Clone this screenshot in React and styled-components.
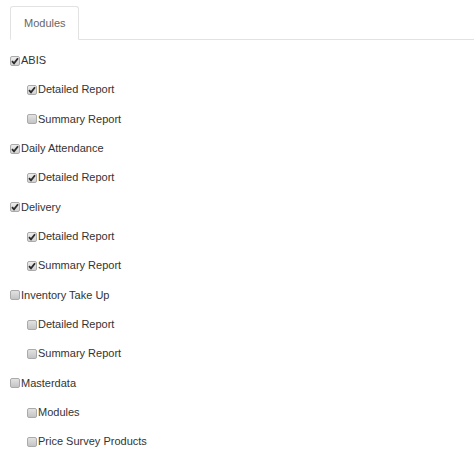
import React, { useState } from "react"
import styled, { createGlobalStyle } from "styled-components"

const modules = [
    { name: "ABIS", checked: true, reports: [["Detailed Report", true], ["Summary Report", false]] },
    { name: "Daily Attendance", checked: true, reports: [["Detailed Report", true]] },
    { name: "Delivery", checked: true, reports: [["Detailed Report", true], ["Summary Report", true]] },
    { name: "Inventory Take Up", checked: false, reports: [["Detailed Report", false], ["Summary Report", false]] },
    { name: "Masterdata", checked: false, reports: [["Modules", false], ["Price Survey Products", false]] },
]

const CheckBox = ({ checked, onClick }) => (
    <Box checked={checked} onClick={onClick}>
        {checked && (
            <svg width="8" height="8" viewBox="0 0 8 8">
                <path d="M1 4.2 L3 6.4 L7 1.2" fill="none" stroke="#2b2b2b" strokeWidth="1.8" />
            </svg>
        )}
    </Box>
)

const App = () => {
    const [state, setState] = useState(modules)

    const toggle = (i, j) => {
        setState(prev =>
            prev.map((m, mi) => {
                if (mi !== i) return m
                if (j === undefined) return { ...m, checked: !m.checked }
                return {
                    ...m,
                    reports: m.reports.map((r, ri) => (ri === j ? [r[0], !r[1]] : r)),
                }
            })
        )
    }

    return (
        <Page>
            <GlobalStyle />
            <Tabs>
                <Tab>Modules</Tab>
            </Tabs>
            <List>
                {state.map((m, i) => (
                    <React.Fragment key={m.name}>
                        <Row>
                            <CheckBox checked={m.checked} onClick={() => toggle(i)} />
                            <Label>{m.name}</Label>
                        </Row>
                        {m.reports.map(([label, checked], j) => (
                            <Row key={label} sub>
                                <CheckBox checked={checked} onClick={() => toggle(i, j)} />
                                <Label>{label}</Label>
                            </Row>
                        ))}
                    </React.Fragment>
                ))}
            </List>
        </Page>
    )
}

export default App

const GlobalStyle = createGlobalStyle`
    body {
        margin: 0;
        background: #fff;
        font-family: "Liberation Sans", Arial, sans-serif;
        color: #333;
    }
`

const Page = styled.div`
    padding: 6px 0 0 10px;
    width: 464px;
`

const Tabs = styled.div`
    display: flex;
    border-bottom: 1px solid #e2e2e2;
    height: 33px;
`

const Tab = styled.div`
    box-sizing: border-box;
    height: 34px;
    padding: 10px 12px 10px 13px;
    border: 1px solid #e2e2e2;
    border-bottom-color: #fff;
    border-radius: 3px 3px 0 0;
    background: #fff;
    font-size: 11px;
    line-height: 13px;
    color: #666;
`

const List = styled.div`
    display: flex;
    flex-direction: column;
    margin-top: 6px;
`

const Row = styled.div`
    display: flex;
    align-items: center;
    height: 29.33px;
    padding-left: ${props => (props.sub ? "17px" : "0")};
`

const Box = styled.span`
    box-sizing: border-box;
    display: flex;
    align-items: center;
    justify-content: center;
    width: 10px;
    height: 10px;
    margin-right: 1px;
    border: 1px solid #aaa;
    border-radius: 2px;
    background: ${props =>
        props.checked
            ? "linear-gradient(#ececec, #d2d2d2)"
            : "linear-gradient(#e2e2e2, #c4c4c4)"};
    cursor: pointer;
`

const Label = styled.span`
    font-size: 11px;
    line-height: 13px;
    color: #333;
`
